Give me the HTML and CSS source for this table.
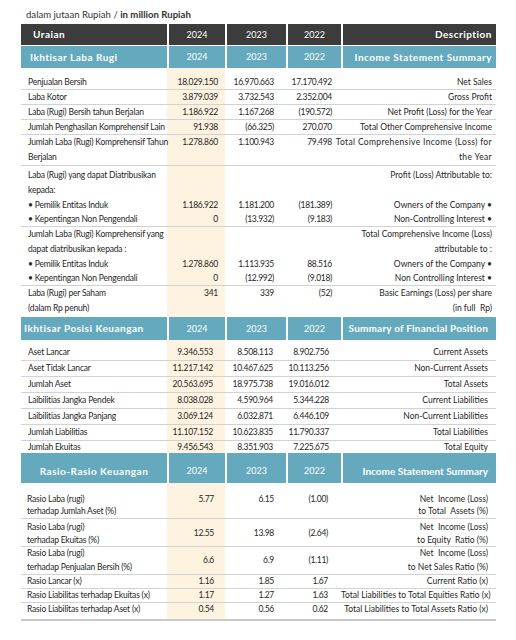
FILE: index.html
```html
<!DOCTYPE html>
<html lang="id">

<head>
    <meta charset="UTF-8">
    <title>Ikhtisar Keuangan</title>
    <link rel="stylesheet" href="styles.css">
</head>

<body>
    <div class="page">
        <p class="unit">dalam jutaan Rupiah / <b>in million Rupiah</b></p>

        <!-- laba rugi -->
        <table class="fin s1">
            <thead>
                <tr class="dark">
                    <th class="ur">Uraian</th>
                    <th class="y24">2024</th>
                    <th class="y23">2023</th>
                    <th class="y22">2022</th>
                    <th class="desc">Description</th>
                </tr>
                <tr class="teal">
                    <th class="ur">Ikhtisar Laba Rugi</th>
                    <th class="y24">2024</th>
                    <th class="y23">2023</th>
                    <th class="y22">2022</th>
                    <th class="desc">Income Statement Summary</th>
                </tr>
            </thead>
            <tbody>
                <tr class="ln first">
                    <td class="lbl">Penjualan Bersih</td>
                    <td class="num hl">18.029.150</td>
                    <td class="num">16.970.663</td>
                    <td class="num">17.170.492</td>
                    <td class="desc">Net Sales</td>
                </tr>
                <tr class="ln">
                    <td class="lbl">Laba Kotor</td>
                    <td class="num hl">3.879.039</td>
                    <td class="num">3.732.543</td>
                    <td class="num">2.352.004</td>
                    <td class="desc">Gross Profit</td>
                </tr>
                <tr class="ln">
                    <td class="lbl">Laba (Rugi) Bersih tahun Berjalan</td>
                    <td class="num hl">1.186.922</td>
                    <td class="num">1.167.268</td>
                    <td class="num">(190.572)</td>
                    <td class="desc">Net Profit (Loss) for the Year</td>
                </tr>
                <tr class="ln">
                    <td class="lbl">Jumlah Penghasilan Komprehensif Lain</td>
                    <td class="num hl">91.938</td>
                    <td class="num">(66.325)</td>
                    <td class="num">270.070</td>
                    <td class="desc">Total Other Comprehensive Income</td>
                </tr>
                <tr class="ln two">
                    <td class="lbl">Jumlah Laba (Rugi) Komprehensif Tahun<br>Berjalan</td>
                    <td class="num hl">1.278.860</td>
                    <td class="num">1.100.943</td>
                    <td class="num">79.498</td>
                    <td class="desc"><span class="wide">Total Comprehensive Income (Loss) for<br>the Year</span></td>
                </tr>
                <tr class="two grp">
                    <td class="lbl">Laba (Rugi) yang dapat Diatribusikan<br>kepada:</td>
                    <td class="num hl"></td>
                    <td class="num"></td>
                    <td class="num"></td>
                    <td class="desc">Profit (Loss) Attributable to:</td>
                </tr>
                <tr>
                    <td class="lbl">• Pemilik Entitas Induk</td>
                    <td class="num hl">1.186.922</td>
                    <td class="num">1.181.200</td>
                    <td class="num">(181.389)</td>
                    <td class="desc">Owners of the Company •</td>
                </tr>
                <tr class="ln">
                    <td class="lbl">• Kepentingan Non Pengendali</td>
                    <td class="num hl">0</td>
                    <td class="num">(13.932)</td>
                    <td class="num">(9.183)</td>
                    <td class="desc">Non-Controlling Interest •</td>
                </tr>
                <tr class="two">
                    <td class="lbl">Jumlah Laba (Rugi) Komprehensif yang<br>dapat diatribusikan kepada :</td>
                    <td class="num hl"></td>
                    <td class="num"></td>
                    <td class="num"></td>
                    <td class="desc">Total Comprehensive Income (Loss)<br>attributable to :</td>
                </tr>
                <tr>
                    <td class="lbl">• Pemilik Entitas Induk</td>
                    <td class="num hl">1.278.860</td>
                    <td class="num">1.113.935</td>
                    <td class="num">88.516</td>
                    <td class="desc">Owners of the Company •</td>
                </tr>
                <tr class="ln">
                    <td class="lbl">• Kepentingan Non Pengendali</td>
                    <td class="num hl">0</td>
                    <td class="num">(12.992)</td>
                    <td class="num">(9.018)</td>
                    <td class="desc">Non Controlling Interest •</td>
                </tr>
                <tr class="two last">
                    <td class="lbl">Laba (Rugi) per Saham<br>(dalam Rp penuh)</td>
                    <td class="num hl">341</td>
                    <td class="num">339</td>
                    <td class="num">(52)</td>
                    <td class="desc">Basic Earnings (Loss) per share<br>(in full&nbsp; Rp)</td>
                </tr>
            </tbody>
        </table>

        <!-- posisi keuangan -->
        <table class="fin s2">
            <thead>
                <tr class="teal">
                    <th class="ur">Ikhtisar Posisi Keuangan</th>
                    <th class="y24">2024</th>
                    <th class="y23">2023</th>
                    <th class="y22">2022</th>
                    <th class="desc">Summary of Financial Position</th>
                </tr>
            </thead>
            <tbody>
                <tr class="ln first">
                    <td class="lbl">Aset Lancar</td>
                    <td class="num hl">9.346.553</td>
                    <td class="num">8.508.113</td>
                    <td class="num">8.902.756</td>
                    <td class="desc">Current Assets</td>
                </tr>
                <tr class="ln">
                    <td class="lbl">Aset Tidak Lancar</td>
                    <td class="num hl">11.217.142</td>
                    <td class="num">10.467.625</td>
                    <td class="num">10.113.256</td>
                    <td class="desc">Non-Current Assets</td>
                </tr>
                <tr class="ln">
                    <td class="lbl">Jumlah Aset</td>
                    <td class="num hl">20.563.695</td>
                    <td class="num">18.975.738</td>
                    <td class="num">19.016.012</td>
                    <td class="desc">Total Assets</td>
                </tr>
                <tr class="ln">
                    <td class="lbl">Laibilitias Jangka Pendek</td>
                    <td class="num hl">8.038.028</td>
                    <td class="num">4.590.964</td>
                    <td class="num">5.344.228</td>
                    <td class="desc">Current Liabilities</td>
                </tr>
                <tr class="ln">
                    <td class="lbl">Laibilitias Jangka Panjang</td>
                    <td class="num hl">3.069.124</td>
                    <td class="num">6.032.871</td>
                    <td class="num">6.446.109</td>
                    <td class="desc">Non-Current Liabilities</td>
                </tr>
                <tr class="ln">
                    <td class="lbl">Jumlah Liabilitias</td>
                    <td class="num hl">11.107.152</td>
                    <td class="num">10.623.835</td>
                    <td class="num">11.790.337</td>
                    <td class="desc">Total Liabilities</td>
                </tr>
                <tr class="last">
                    <td class="lbl">Jumlah Ekuitas</td>
                    <td class="num hl">9.456.543</td>
                    <td class="num">8.351.903</td>
                    <td class="num">7.225.675</td>
                    <td class="desc">Total Equity</td>
                </tr>
            </tbody>
        </table>

        <!-- rasio -->
        <table class="fin s3">
            <thead>
                <tr class="teal">
                    <th class="ur">Rasio-Rasio Keuangan</th>
                    <th class="y24">2024</th>
                    <th class="y23">2023</th>
                    <th class="y22">2022</th>
                    <th class="desc">Income Statement Summary</th>
                </tr>
            </thead>
            <tbody>
                <tr class="ln r1">
                    <td class="lbl">Rasio Laba (rugi)<br>terhadap Jumlah Aset (%)</td>
                    <td class="num hl">5.77</td>
                    <td class="num">6.15</td>
                    <td class="num">(1.00)</td>
                    <td class="desc">Net&nbsp; Income (Loss)<br>to Total&nbsp; Assets (%)</td>
                </tr>
                <tr class="ln r2 mid">
                    <td class="lbl">Rasio Laba (rugi)<br>terhadap Ekuitas (%)</td>
                    <td class="num hl">12.55</td>
                    <td class="num">13.98</td>
                    <td class="num">(2.64)</td>
                    <td class="desc">Net&nbsp; Income (Loss)<br>to Equity&nbsp; Ratio (%)</td>
                </tr>
                <tr class="ln r3 mid">
                    <td class="lbl">Rasio Laba (rugi)<br>terhadap Penjualan Bersih (%)</td>
                    <td class="num hl">6.6</td>
                    <td class="num">6.9</td>
                    <td class="num">(1.11)</td>
                    <td class="desc">Net&nbsp; Income (Loss)<br>to Net Sales Ratio (%)</td>
                </tr>
                <tr class="ln">
                    <td class="lbl">Rasio Lancar (x)</td>
                    <td class="num hl">1.16</td>
                    <td class="num">1.85</td>
                    <td class="num">1.67</td>
                    <td class="desc">Current Ratio (x)</td>
                </tr>
                <tr class="ln">
                    <td class="lbl">Rasio Liabilitas terhadap Ekuitas (x)</td>
                    <td class="num hl">1.17</td>
                    <td class="num">1.27</td>
                    <td class="num">1.63</td>
                    <td class="desc">Total Liabilities to Total Equities Ratio (x)</td>
                </tr>
                <tr class="end">
                    <td class="lbl">Rasio Liabilitas terhadap Aset (x)</td>
                    <td class="num hl">0.54</td>
                    <td class="num">0.56</td>
                    <td class="num">0.62</td>
                    <td class="desc">Total Liabilities to Total Assets Ratio (x)</td>
                </tr>
            </tbody>
        </table>
    </div>
</body>

</html>
```

FILE: styles.css
```css
body {
    margin: 0;
    background-color: white;
    font-family: Lato, "Noto Sans", sans-serif;
    color: #262626;
}

.page {
    width: 475px;
    padding: 9px 0 0 21px;
}

.unit {
    margin: 0 0 3px 5px;
    font-size: 9.6px;
    line-height: 12px;
    color: #333;
}

.fin {
    width: 475px;
    border-spacing: 0;
    table-layout: fixed;
    font-size: 8.5px;
}

.fin th,
.fin td {
    box-sizing: border-box;
    padding: 0;
    vertical-align: top;
    white-space: nowrap;
}

/************************ header rows *****************************/

.fin th {
    color: white;
    font-weight: 400;
    font-size: 9px;
    text-align: center;
}

.fin th+th {
    border-left: 2px solid white;
}

.dark th {
    background-color: #3c3c3c;
    height: 22px;
    line-height: 21px;
    border-bottom: 1px solid white;
}

.teal th {
    background-color: #64a9be;
    height: 22px;
    line-height: 22px;
}

.fin th.ur {
    width: 146px;
    text-align: left;
    font-weight: 700;
    font-size: 10px;
    letter-spacing: .5px;
    padding-left: 12px;
}

.fin .teal th.ur {
    padding-left: 9px;
}

th.y24 {
    width: 58px;
}

th.y23 {
    width: 61px;
}

th.y22 {
    width: 55px;
}

.fin th.desc {
    width: 155px;
    text-align: right;
    font-weight: 700;
    font-size: 10px;
    letter-spacing: .5px;
    padding-right: 4px;
}

/************************ data cells *****************************/

.fin td.lbl {
    padding-left: 7px;
    letter-spacing: -.2px;
}

.fin td.num {
    text-align: right;
    letter-spacing: -.3px;
}

.fin td.hl {
    background-color: #fdf3e0;
}

.fin td.desc {
    text-align: right;
    padding-right: 4px;
}

.wide {
    display: block;
    margin-left: -30px;
    letter-spacing: .35px;
}

.ln td {
    border-bottom: 1px solid #d2d2d2;
}

/* laba rugi */
.s1 td {
    line-height: 14px;
}

.s1 .two td {
    line-height: 15px;
}

.s1 .first td {
    padding-top: 7px;
}

.s1 .grp td {
    padding-top: 2px;
}

.s1 .last td {
    padding-bottom: 1px;
}

.s1 td.hl {
    padding-right: 7px;
}

.s1 td.hl+td {
    padding-right: 12px;
}

.s1 td.hl+td+td {
    padding-right: 9px;
}

/* posisi keuangan */
.s2 .teal th {
    height: 23px;
    line-height: 23px;
}

.fin.s2 .teal th.ur {
    padding-left: 3px;
}

.fin.s2 th.desc {
    padding-right: 8px;
    letter-spacing: .2px;
}

.s2 td {
    line-height: 15px;
}

.s2 .first td {
    padding-top: 5px;
}

.s2 .last td {
    line-height: 12px;
}

.s2 td.hl,
.s2 td.hl+td+td {
    padding-right: 12px;
}

.s2 td.hl+td {
    padding-right: 13px;
}

.fin.s2 td.desc,
.fin.s3 td.desc {
    padding-right: 8px;
}

/* rasio */
.s3 .teal th {
    height: 30px;
    padding-top: 7px;
    line-height: 22px;
}

.fin.s3 .teal th.ur {
    padding-left: 0;
    text-align: center;
}

.fin.s3 th.desc {
    padding-right: 8px;
    letter-spacing: 0;
}

.s3 td {
    line-height: 13px;
}

.s3 .r1 td {
    line-height: 12px;
    padding: 10px 0 1px;
}

.s3 .r2 td {
    line-height: 12.5px;
    padding-top: 2px;
}

.s3 .r3 td {
    line-height: 13.5px;
}

.s3 .mid td.num {
    vertical-align: middle;
}

.fin.s3 td.lbl {
    padding-left: 6px;
}

.s3 td.hl {
    padding-right: 11px;
}

.s3 td.hl+td {
    padding-right: 12px;
}

.s3 td.hl+td+td {
    padding-right: 13px;
}

.s3 .end td {
    padding-bottom: 3px;
    border-bottom: 2px solid #c9c9c9;
}
```
